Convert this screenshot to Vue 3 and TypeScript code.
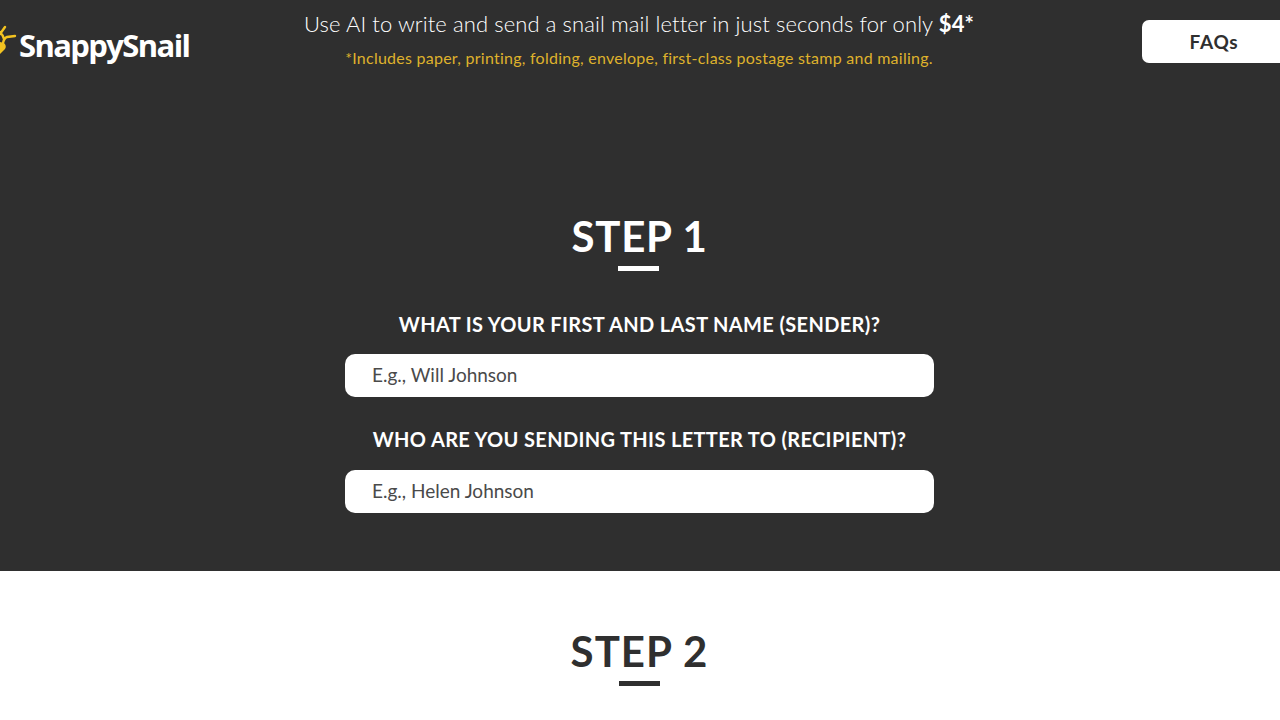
<script setup lang="ts">
const fields = [
  { label: 'WHAT IS YOUR FIRST AND LAST NAME (SENDER)?', placeholder: 'E.g., Will Johnson' },
  { label: 'WHO ARE YOU SENDING THIS LETTER TO (RECIPIENT)?', placeholder: 'E.g., Helen Johnson' }
]
</script>

<template>
  <div class="page">
    <section class="hero">
      <header class="top">
        <div class="logo">
          <svg class="snail" width="19" height="34" viewBox="0 0 19 34" aria-hidden="true">
            <path d="M5 2 L0 9 M0 7 Q3 10 4 14 M15 11 L7 12 Q4 13 3 18" fill="none" stroke="#f3c320" stroke-width="2.4" stroke-linecap="round" />
            <path d="M0 17 L4 18 Q7 21 5 24 L0 29 Z" fill="#f3c320" />
          </svg>
          <span class="word">SnappySnail</span>
        </div>
        <div class="pitch">
          <p class="lead">Use AI to write and send a snail mail letter in just seconds for only <b>$4*</b></p>
          <p class="note">*Includes paper, printing, folding, envelope, first-class postage stamp and mailing.</p>
        </div>
        <button class="faq" type="button">FAQs</button>
      </header>

      <div class="step">
        <h2 class="title first">STEP 1</h2>
        <div class="bar shifted"></div>
        <div class="fields">
          <label v-for="f in fields" :key="f.label" class="field">
            <span class="label">{{ f.label }}</span>
            <input class="input" type="text" :placeholder="f.placeholder" />
          </label>
        </div>
      </div>
    </section>

    <section class="next">
      <h2 class="title dark">STEP 2</h2>
      <div class="bar darkbar"></div>
    </section>
  </div>
</template>

<style>
html, body { margin: 0; background: #fff; overflow: hidden; }
</style>

<style scoped>
.page {
  width: 1280px;
  height: 720px;
  overflow: hidden;
  font-family: Lato, "Open Sans", sans-serif;
}
.hero {
  height: 571px;
  background: #2f2f2f;
  color: #fff;
  box-sizing: border-box;
}
.top {
  display: grid;
  grid-template-columns: 1fr auto 1fr;
  height: 85px;
}
.logo {
  display: flex;
  align-items: flex-start;
  padding-top: 25px;
}
.snail { flex: none; }
.word {
  font-family: "Open Sans", Lato, sans-serif;
  font-weight: 700;
  font-size: 31px;
  line-height: 40px;
  letter-spacing: -1.62px;
  color: #fff;
}
.pitch {
  text-align: center;
  padding-top: 8px;
  margin-right: 2px;
}
.lead {
  margin: 0;
  font-size: 22px;
  line-height: 31px;
  font-weight: 300;
  letter-spacing: 0.1px;
  white-space: nowrap;
}
.lead b { font-weight: 700; }
.note {
  margin: 9px 0 0;
  font-size: 16px;
  line-height: 20px;
  letter-spacing: 0.25px;
  color: #dfb22c;
  white-space: nowrap;
}
.faq {
  justify-self: end;
  width: 138px;
  height: 43px;
  margin-top: 20px;
  border: 0;
  padding: 0 0 0 6px;
  border-radius: 7px 0 0 7px;
  background: #fff;
  color: #2f2f2f;
  font-family: inherit;
  font-size: 19px;
  font-weight: 700;
  letter-spacing: 0.7px;
}
.step {
  display: flex;
  flex-direction: column;
  align-items: center;
  padding: 126px 1px 0 0;
}
.title {
  margin: 0;
  font-size: 42px;
  line-height: 50px;
  font-weight: 700;
  letter-spacing: 1px;
  text-align: center;
}
.first { letter-spacing: 0.7px; }
.bar {
  width: 41px;
  height: 5px;
  margin-top: 5px;
  background: #fff;
}
.shifted { margin-right: 2px; }
.fields {
  display: flex;
  flex-direction: column;
  gap: 29px;
  width: 589px;
  margin-top: 40px;
}
.field {
  display: flex;
  flex-direction: column;
  gap: 17px;
}
.field + .field { gap: 18px; }
.label {
  font-size: 20px;
  line-height: 26px;
  font-weight: 700;
  letter-spacing: 0.35px;
  text-align: center;
  white-space: nowrap;
}
.input {
  box-sizing: border-box;
  width: 100%;
  height: 43px;
  padding: 0 27px 2px;
  border: 0;
  border-radius: 10px;
  background: #fff;
  font-family: inherit;
  font-size: 19px;
  outline: none;
}
.input::placeholder { color: #4a4a4a; opacity: 1; }
.next {
  display: flex;
  flex-direction: column;
  align-items: center;
  padding: 55px 1px 0 0;
}
.dark { color: #2f2f2f; }
.darkbar { background: #2f2f2f; }
</style>
